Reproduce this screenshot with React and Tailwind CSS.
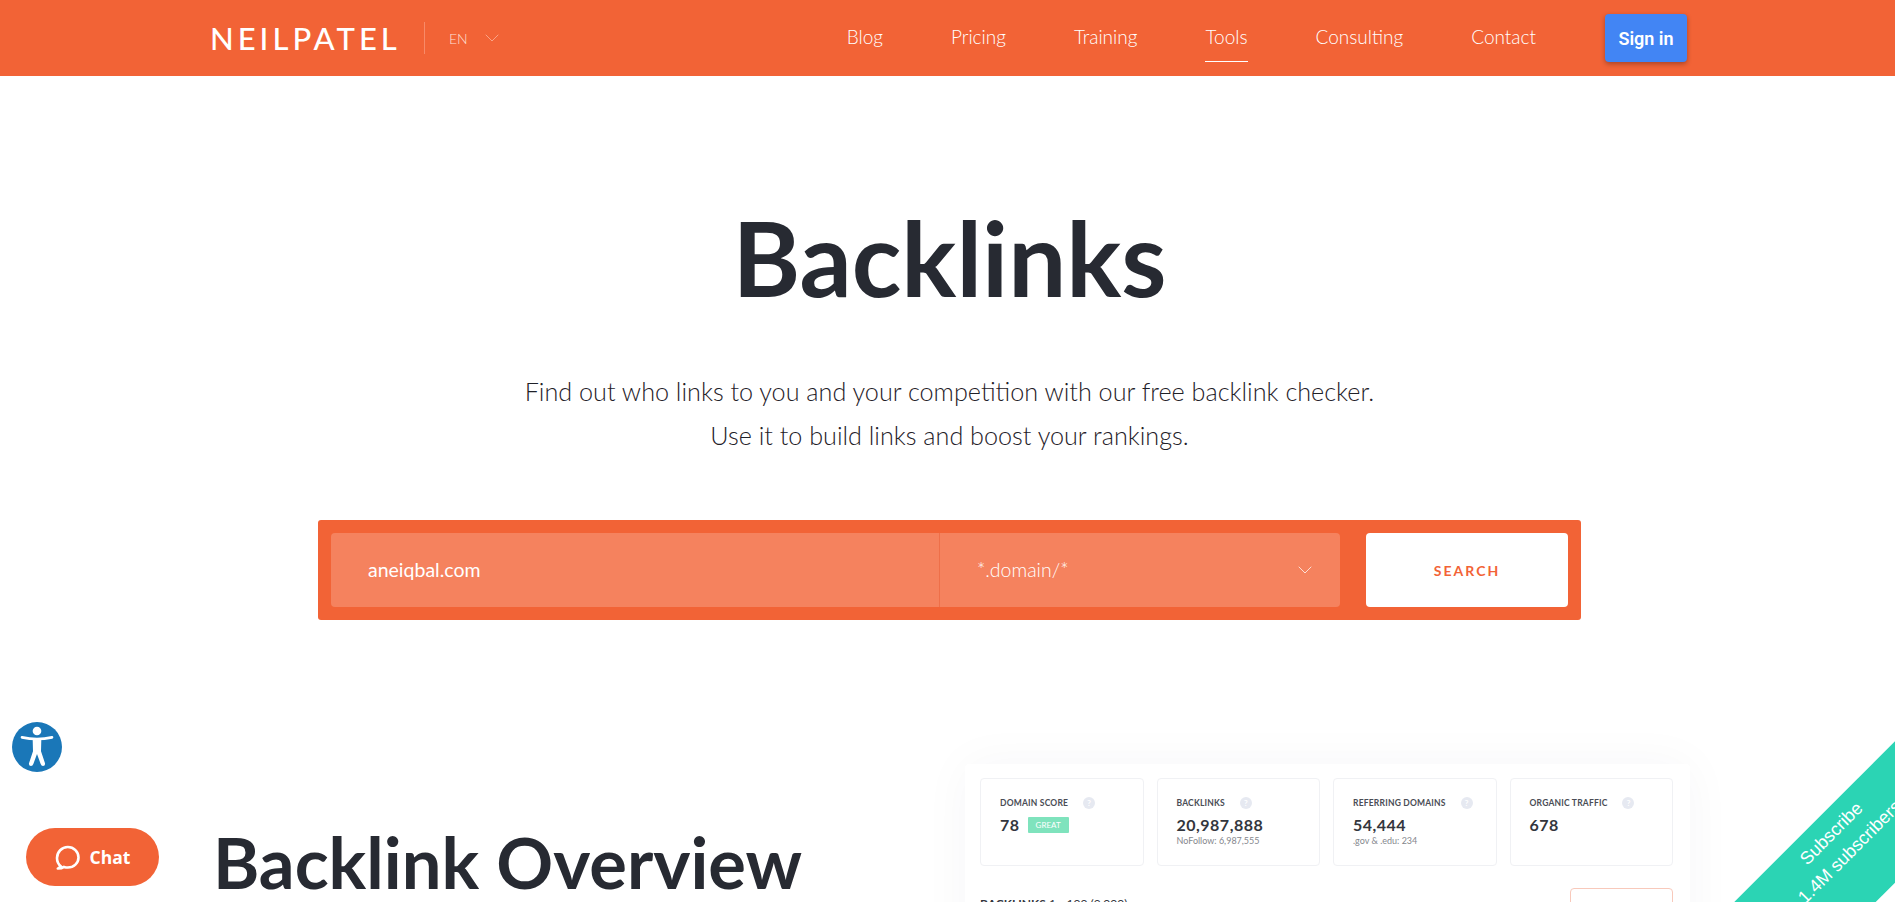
import { ChevronDown } from 'lucide-react';

const NAV = ['Blog', 'Pricing', 'Training', 'Tools', 'Consulting', 'Contact'];

const STATS = [
  { label: 'DOMAIN SCORE', value: '78', badge: 'GREAT' },
  { label: 'BACKLINKS', value: '20,987,888', sub: 'NoFollow: 6,987,555' },
  { label: 'REFERRING DOMAINS', value: '54,444', sub: '.gov & .edu: 234' },
  { label: 'ORGANIC TRAFFIC', value: '678' },
];

const StatCard = ({ label, value, badge, sub }) => (
  <div className="h-[88px] border border-[#f0f1f4] rounded-sm pl-[19px] pt-[15px]">
    <div className="flex items-center gap-[15px] h-[18px]">
      <span className="text-[8.5px] font-bold tracking-[0.2px] text-[#4a4d55] whitespace-nowrap">{label}</span>
      <span className="w-3 h-3 rounded-full bg-[#e6e9f1] text-white text-[8px] leading-3 text-center font-bold">?</span>
    </div>
    <div className="flex items-center gap-2 mt-[2px] h-[22px]">
      <span className="text-[16px] font-bold tracking-[0.5px] text-[#33363d]">{value}</span>
      {badge && <span className="bg-[#7fe3bd] text-white text-[8px] px-2 h-4 leading-4 rounded-[1px]">{badge}</span>}
    </div>
    {sub && <div className="text-[9px] leading-[10px] text-[#85878d]">{sub}</div>}
  </div>
);

const App = () => {
  return (
    <div className="relative h-[902px] overflow-hidden bg-white font-['Lato',sans-serif] text-[#272a32]">
      {/* header */}
      <header className="h-[76px] bg-[#f26336] flex items-center pl-[210px] pr-[208px]">
        <span className="w-[194px] text-[31px] leading-none font-medium tracking-[4px] text-white whitespace-nowrap">NEILPATEL</span>
        <div className="w-px h-8 bg-[#f88a68] ml-[20px]" />
        <span className="ml-6 text-[14px] font-light text-[#fde0d6]">EN</span>
        <ChevronDown size={24} strokeWidth={0.8} className="ml-[12px] text-[#fbb49c]" />
        <nav className="ml-auto flex items-center gap-[68px] text-[19px] font-light text-white">
          {NAV.map((item) => (
            <a key={item} className="relative h-[76px] leading-[74px]">
              {item}
              {item === 'Tools' && <span className="absolute left-0 right-0 top-[61px] h-px bg-white" />}
            </a>
          ))}
        </nav>
        <button className="ml-[69px] w-[82px] h-12 rounded bg-[#4285f4] text-white text-[18px] font-semibold shadow-[0_2px_5px_rgba(0,0,0,0.3)] font-['Roboto',sans-serif]">
          Sign in
        </button>
      </header>

      {/* hero */}
      <section className="flex flex-col items-center pl-[4px]">
        <h1 className="mt-[122px] text-[103px] leading-[118px] font-bold text-center">Backlinks</h1>
        <p className="mt-[53px] text-[25.2px] leading-[44px] font-light text-center text-[#1f2128]">
          Find out who links to you and your competition with our free backlink checker.
          <br />
          Use it to build links and boost your rankings.
        </p>
        <form className="mt-[63px] w-[1263px] h-[100px] bg-[#f26336] rounded-[3px] p-[13px] flex">
          <div className="w-[609px] h-[74px] bg-[#f5825e] rounded-l-sm flex items-center pl-[37px] text-[19.5px] text-white border-r border-[#ee6f49]">
            aneiqbal.com
          </div>
          <div className="w-[400px] h-[74px] bg-[#f5825e] rounded-r-sm flex items-center justify-between pl-[37px] pr-[23px] text-[19.5px] font-light text-white">
            *.domain/*
            <ChevronDown size={24} strokeWidth={1} className="text-[#fde0d6]" />
          </div>
          <button className="ml-[26px] w-[202px] h-[74px] bg-white rounded-sm text-[#f26336] text-[14px] font-bold tracking-[2px]">
            SEARCH
          </button>
        </form>
      </section>

      {/* overview */}
      <section className="mt-[144px] pl-[213px] flex">
        <h2 className="w-[752px] mt-[56px] text-[70.5px] leading-[84px] font-bold whitespace-nowrap">Backlink Overview</h2>
        <div className="w-[725px] h-[300px] bg-white rounded shadow-[0_0_50px_rgba(40,40,70,0.04)] pl-[15px] pr-[17px] pt-[14px]">
          <div className="grid grid-cols-4 gap-[13px]">
            {STATS.map((s) => (
              <StatCard key={s.label} {...s} />
            ))}
          </div>
          <div className="flex items-start justify-between mt-[22px]">
            <span className="text-[12px] text-[#33363d] mt-[7px]"><b>BACKLINKS</b> 1 - 100 (9,000)</span>
            <span className="w-[103px] h-10 border border-[#f8c9bb] rounded-sm pt-[9px] text-center text-[10px] font-bold tracking-[0.5px] text-[#f8c9bb]">EXPORT TO CSV</span>
          </div>
        </div>
      </section>

      {/* floating widgets */}
      <button className="absolute left-[12px] top-[722px] w-[50px] h-[50px] rounded-full bg-[#1a77b8] flex items-center justify-center">
        <svg width="50" height="50" viewBox="0 0 150 150" className="text-white">
          <circle cx="75" cy="27" r="13" fill="currentColor" />
          <path d="M30 46Q75 56 120 46" stroke="currentColor" strokeWidth="8" strokeLinecap="round" fill="none" />
          <path d="M62 50H88L87 88L99 124Q100 132 93 132Q88 132 86 126L75 96L64 126Q62 132 57 132Q50 132 51 124L63 88Z" fill="currentColor" />
        </svg>
      </button>
      <button className="absolute left-[26px] top-[828px] w-[133px] h-[58px] rounded-full bg-[#f26336] text-white flex items-center justify-center gap-[10px] font-['Open_Sans',sans-serif] text-[17.5px] font-bold">
        <svg width="25" height="25" viewBox="0 0 25 25" fill="none">
          <path d="M6 21.5C3.5 19.5 2 16.5 2 13C2 7 6.8 2 12.8 2S23.5 6.8 23.5 12.5S18.8 22.5 12.8 22.5C11.5 22.5 10.3 22.3 9 21.9C7.5 23 5.5 23.5 2.8 23.5C4.5 22.5 5.5 22 6 21.5Z" stroke="currentColor" strokeWidth="2.6" strokeLinejoin="round" />
        </svg>
        Chat
      </button>
      <div className="absolute left-[1651px] top-[806px] w-[400px] h-[100px] -rotate-45 bg-[#2bd4b4] text-white text-center text-[18px] leading-[26px] pt-[7px] pl-[4px] font-['Liberation_Sans',sans-serif]">
        Subscribe
        <br />
        1.4M subscribers
      </div>
    </div>
  );
};

export default App;
